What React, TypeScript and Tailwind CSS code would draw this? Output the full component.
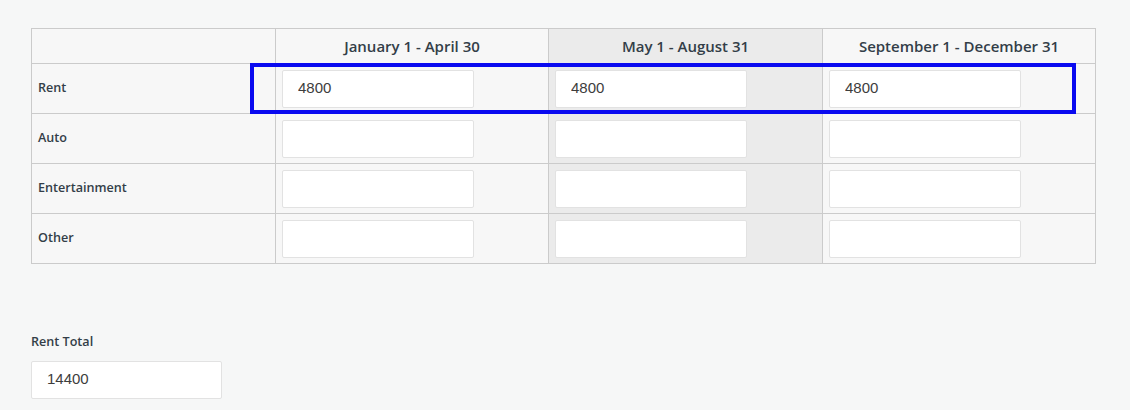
const rows = ['Rent', 'Auto', 'Entertainment', 'Other'];
const periods = ['January 1 - April 30', 'May 1 - August 31', 'September 1 - December 31'];
const values: Record<string, string[]> = {
  Rent: ['4800', '4800', '4800'],
};

function Cell({ value, highlight }: { value?: string; highlight?: boolean }) {
  return (
    <td className={`border border-[#cbcbcb] px-[6px] py-0 align-middle ${highlight ? 'bg-[#ebebeb]' : 'bg-[#f7f7f7]'}`}>
      <input
        readOnly
        value={value ?? ''}
        className="block h-[38px] w-[192px] rounded-[2px] border border-[#e2e2e2] bg-white pb-[3px] pl-[15px] text-[15px] text-[#3d3d3d] outline-none font-['Liberation_Sans',Arial,sans-serif]"
      />
    </td>
  );
}

export default function App() {
  return (
    <div className="min-h-[410px] w-full bg-[#f6f7f7] pl-[31px] pt-[28px] font-['Open_Sans',Arial,sans-serif] text-[#333e48]">
      <div className="relative w-[1064px]">
        <table className="w-[1064px] table-fixed border-collapse">
          <colgroup>
            <col className="w-[244px]" />
            <col className="w-[273px]" />
            <col className="w-[274px]" />
            <col className="w-[273px]" />
          </colgroup>
          <thead>
            <tr className="h-[35px]">
              <th className="border border-[#cbcbcb] bg-[#f7f7f7]" />
              {periods.map((p, i) => (
                <th
                  key={p}
                  className={`border border-[#cbcbcb] text-center text-[15px] font-semibold ${i === 1 ? 'bg-[#ebebeb]' : 'bg-[#f7f7f7]'}`}
                >
                  {p}
                </th>
              ))}
            </tr>
          </thead>
          <tbody>
            {rows.map((r) => (
              <tr key={r} className="h-[50px]">
                <td className="border border-[#cbcbcb] bg-[#f7f7f7] pl-[6px] text-[12.6px] font-semibold">{r}</td>
                {periods.map((p, i) => (
                  <Cell key={p} value={values[r]?.[i]} highlight={i === 1} />
                ))}
              </tr>
            ))}
          </tbody>
        </table>
        {/* focus outline over the Rent row */}
        <div className="pointer-events-none absolute left-[219px] top-[35px] h-[51px] w-[826px] border-4 border-[#0a0af0]" />
      </div>

      <div className="mt-[69px]">
        <div className="text-[12.6px] font-semibold">Rent Total</div>
        <input
          readOnly
          value="14400"
          className="mt-[9px] block h-[38px] w-[191px] rounded-[2px] border border-[#e2e2e2] bg-white pb-[3px] pl-[15px] text-[15px] text-[#3d3d3d] outline-none font-['Liberation_Sans',Arial,sans-serif]"
        />
      </div>
    </div>
  );
}
